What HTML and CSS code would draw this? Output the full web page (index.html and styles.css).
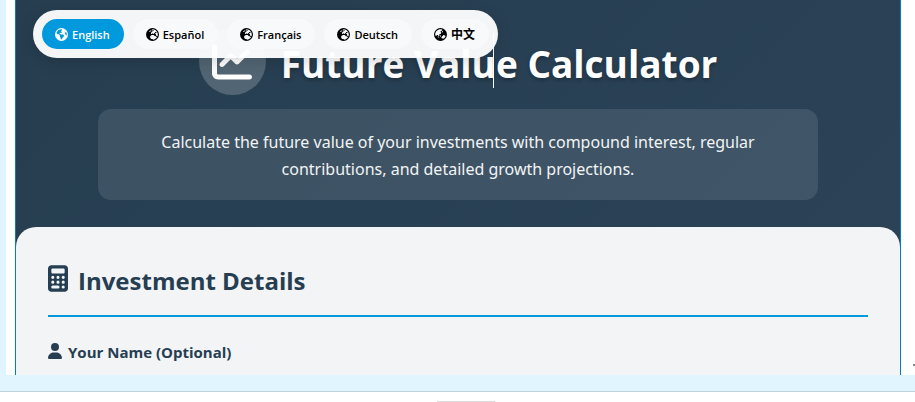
FILE: index.html
```html
<!DOCTYPE html>
<html lang="en">
<head>
    <meta charset="UTF-8">
    <meta name="viewport" content="width=device-width, initial-scale=1.0">
    <title>Future Value Calculator</title>
    <link rel="stylesheet" href="styles.css">
</head>
<body>
    <!-- Shared icons -->
    <svg class="icon-defs" aria-hidden="true">
        <symbol id="icon-americas" viewBox="0 0 512 512">
            <path d="M57.7 193l9.4 16.4c8.3 14.5 21.9 25.2 38 29.8L163 255.7c17.2 4.9 29 20.6 29 38.5v39.9c0 11 6.2 21 16 25.9s16 14.9 16 25.9v39c0 15.6 14.9 26.9 29.9 22.6c16.1-4.6 28.6-17.5 32.7-33.8l2.8-11.2c4.2-16.9 15.2-31.4 30.3-40l8.1-4.6c15-8.5 24.2-24.5 24.2-41.7v-8.3c0-12.7-5.1-24.9-14.1-33.9l-3.9-3.9c-9-9-21.2-14.1-33.9-14.1H257c-11.1 0-22.1-2.9-31.8-8.4l-34.5-19.7c-4.3-2.5-7.6-6.5-9.2-11.2c-3.2-9.6 1.1-20 10.2-24.5l5.9-3c6.6-3.3 14.3-3.9 21.3-1.5l23.2 7.7c8.2 2.7 17.2-.4 21.9-7.5c4.7-7 4.2-16.3-1.2-22.8l-13.6-16.3c-10-12-9.9-29.5 .3-41.3l15.7-18.3c8.8-10.3 10.2-25 3.5-36.7l-2.4-4.2c-3.5-.2-6.9-.3-10.4-.3C163.1 48 84.4 108.9 57.7 193zM464 256c0-36.8-9.6-71.4-26.4-101.5L412 164.8c-15.7 6.3-23.8 23.8-18.5 39.8l16.9 50.7c3.5 10.4 12 18.3 22.6 20.9l29.1 7.3c1.2-9 1.8-18.2 1.8-27.5zM0 256a256 256 0 1 1 512 0A256 256 0 1 1 0 256z"/>
        </symbol>
        <symbol id="icon-europe" viewBox="0 0 512 512">
            <path fill-rule="evenodd" d="M266.3 48.3L232.5 73.6c-5.4 4-8.5 10.4-8.5 17.1v9.1c0 6.8 5.5 12.3 12.3 12.3c2.4 0 4.8-.7 6.8-2.1l41.8-27.9c2-1.3 4.4-2.1 6.8-2.1h1c6.2 0 11.3 5.1 11.3 11.3c0 3-1.2 5.9-3.3 8l-19.9 19.9c-5.8 5.8-12.9 10.2-20.7 12.8l-26.5 8.8c-5.8 1.9-9.6 7.3-9.6 13.4c0 3.7-1.5 7.3-4.1 10l-17.9 17.9c-6.4 6.4-9.9 15-9.9 24v4.3c0 16.4 13.6 29.7 29.9 29.7c11 0 21.2-6.2 26.1-16l4-8.1c2.4-4.8 7.4-7.9 12.8-7.9c4.5 0 8.7 2.1 11.4 5.7l16.3 21.7c2.1 2.9 5.5 4.5 9.1 4.5c8.4 0 13.9-8.9 10.1-16.4l-1.1-2.3c-3.5-7 0-15.5 7.5-18l21.2-7.1c7.6-2.5 12.7-9.6 12.7-17.6c0-10.3 8.3-18.6 18.6-18.6H400c8.8 0 16 7.2 16 16s-7.2 16-16 16H379.3c-7.2 0-14.2 2.9-19.3 8l-4.7 4.7c-2.1 2.1-3.3 5-3.3 8c0 6.2 5.1 11.3 11.3 11.3h11.3c6 0 11.8 2.4 16 6.6l6.5 6.5c1.8 1.8 2.8 4.3 2.8 6.8s-1 5-2.8 6.8l-7.5 7.5C386 262 384 266.9 384 272s2 10 5.7 13.7L408 304c10.2 10.2 24.1 16 38.6 16H454c6.5-20.2 10-41.7 10-64c0-111.4-87.6-202.4-197.7-207.7zm172 307.9c-3.7-2.6-8.2-4.1-13-4.1c-6 0-11.8-2.4-16-6.6L396 332c-7.7-7.7-18-12-28.9-12c-9.7 0-19.2-3.5-26.6-9.8L314 287.4c-11.6-9.9-26.4-15.4-41.7-15.4H251.4c-12.6 0-25 3.7-35.5 10.7L188.5 301c-17.8 11.9-28.5 31.9-28.5 53.3v3.2c0 17 6.7 33.3 18.7 45.3l16 16c8.5 8.5 20 13.3 32 13.3H248c13.3 0 24 10.7 24 24c0 2.5 .4 5 1.1 7.3c71.3-5.8 132.5-47.6 165.2-107.2zM0 256a256 256 0 1 1 512 0A256 256 0 1 1 0 256zM187.3 100.7c-6.2-6.2-16.4-6.2-22.6 0l-32 32c-6.2 6.2-6.2 16.4 0 22.6s16.4 6.2 22.6 0l32-32c6.2-6.2 6.2-16.4 0-22.6z"/>
        </symbol>
        <symbol id="icon-asia" viewBox="0 0 512 512">
            <path fill-rule="evenodd" d="M51.7 295.1l31.7 6.3c7.9 1.6 16-.9 21.7-6.6l15.4-15.4c11.6-11.6 31.1-8.4 38.4 6.2l9.3 18.5c4.8 9.6 14.6 15.7 25.4 15.7c15.2 0 26.1-14.6 21.7-29.2l-6-19.9c-4.6-15.4 6.9-30.9 23-30.9h2.3c13.4 0 25.9-6.7 33.3-17.8l10.7-16.1c5.6-8.5 5.3-19.6-.8-27.7l-16.1-21.5c-10.3-13.7-3.3-33.5 13.4-37.7l17-4.3c7.5-1.9 13.6-7.2 16.5-14.4l16.4-40.9C303.4 52.1 280.2 48 256 48C141.1 48 48 141.1 48 256c0 13.4 1.3 26.5 3.7 39.1zm407.7 4.6c-3-.3-6-.1-9 .8l-15.8 4.4c-6.7 1.9-13.8-.9-17.5-6.7l-2-3.1c-6-9.4-16.4-15.1-27.6-15.1s-21.6 5.7-27.6 15.1l-6.1 9.5c-1.4 2.2-3.4 4.1-5.7 5.3L312 330.1c-18.1 10.1-25.5 32.4-17 51.3l5.5 12.4c8.6 19.2 30.7 28.5 50.5 21.1l2.6-1c10-3.7 21.3-2.2 29.9 4.1l1.5 1.1c37.2-29.5 64.1-71.4 74.4-119.5zM0 256a256 256 0 1 1 512 0A256 256 0 1 1 0 256zm144.5 92.1c-2.1 8.6 3.1 17.3 11.6 19.4l32 8c8.6 2.1 17.3-3.1 19.4-11.6s-3.1-17.3-11.6-19.4l-32-8c-8.6-2.1-17.3 3.1-19.4 11.6zm92-20c-2.1 8.6 3.1 17.3 11.6 19.4s17.3-3.1 19.4-11.6l8-32c2.1-8.6-3.1-17.3-11.6-19.4s-17.3 3.1-19.4 11.6l-8 32zM343.2 113.7c-7.9-4-17.5-.7-21.5 7.2l-16 32c-4 7.9-.7 17.5 7.2 21.5s17.5 .7 21.5-7.2l16-32c4-7.9 .7-17.5-7.2-21.5z"/>
        </symbol>
        <symbol id="icon-chart" viewBox="0 0 512 512">
            <path d="M64 64c0-17.7-14.3-32-32-32S0 46.3 0 64V400c0 44.2 35.8 80 80 80H480c17.7 0 32-14.3 32-32s-14.3-32-32-32H80c-8.8 0-16-7.2-16-16V64zm406.6 86.6c12.5-12.5 12.5-32.8 0-45.3s-32.8-12.5-45.3 0L320 210.7l-57.4-57.4c-12.5-12.5-32.8-12.5-45.3 0l-112 112c-12.5 12.5-12.5 32.8 0 45.3s32.8 12.5 45.3 0L240 221.3l57.4 57.4c12.5 12.5 32.8 12.5 45.3 0l128-128z"/>
        </symbol>
        <symbol id="icon-calculator" viewBox="0 0 384 512">
            <path fill-rule="evenodd" d="M64 0C28.7 0 0 28.7 0 64v384c0 35.3 28.7 64 64 64h256c35.3 0 64-28.7 64-64V64c0-35.3-28.7-64-64-64H64zM88 64h208a24 24 0 0 1 24 24v48a24 24 0 0 1-24 24H88a24 24 0 0 1-24-24V88a24 24 0 0 1 24-24zM92 204a30 30 0 1 1 0 60a30 30 0 1 1 0-60zM192 204a30 30 0 1 1 0 60a30 30 0 1 1 0-60zM292 204a30 30 0 1 1 0 60a30 30 0 1 1 0-60zM92 296a30 30 0 1 1 0 60a30 30 0 1 1 0-60zM192 296a30 30 0 1 1 0 60a30 30 0 1 1 0-60zM292 296a30 30 0 1 1 0 60a30 30 0 1 1 0-60zM92 388h100a30 30 0 1 1 0 60H92a30 30 0 1 1 0-60zM292 388a30 30 0 1 1 0 60a30 30 0 1 1 0-60z"/>
        </symbol>
        <symbol id="icon-user" viewBox="0 0 448 512">
            <path d="M224 256A128 128 0 1 0 224 0a128 128 0 1 0 0 256zm-45.7 48C79.8 304 0 383.8 0 482.3C0 498.7 13.3 512 29.7 512H418.3c16.4 0 29.7-13.3 29.7-29.7C448 383.8 368.2 304 269.7 304H178.3z"/>
        </symbol>
    </svg>

    <nav class="language-selector" aria-label="Language">
        <button class="lang-btn active"><svg class="lang-icon"><use href="#icon-americas"/></svg>English</button>
        <button class="lang-btn"><svg class="lang-icon"><use href="#icon-europe"/></svg>Español</button>
        <button class="lang-btn"><svg class="lang-icon"><use href="#icon-europe"/></svg>Français</button>
        <button class="lang-btn"><svg class="lang-icon"><use href="#icon-europe"/></svg>Deutsch</button>
        <button class="lang-btn lang-zh"><svg class="lang-icon"><use href="#icon-asia"/></svg>中文</button>
    </nav>

    <div class="frame">
        <div class="page">
            <div class="container">
                <header class="header">
                    <h1>
                        <span class="title-icon"><svg><use href="#icon-chart"/></svg></span>
                        <span class="title-text">Future Valu<span class="caret"></span>e Calculator</span>
                    </h1>
                    <p class="subtitle">Calculate the future value of your investments with compound interest, regular contributions, and detailed growth projections.</p>
                </header>
                <main class="form-section">
                    <h2><svg class="section-icon"><use href="#icon-calculator"/></svg>Investment Details</h2>
                    <label class="field-label" for="user-name"><svg class="label-icon"><use href="#icon-user"/></svg>Your Name (Optional)</label>
                    <input type="text" id="user-name">
                </main>
            </div>
            <div class="scroll-track"><span class="scroll-arrow"></span></div>
        </div>
    </div>
    <footer class="dock"><span class="dock-handle"></span></footer>
</body>
</html>
```

FILE: styles.css
```css
* {
    box-sizing: border-box;
}
body {
    margin: 0;
    height: 100vh;
    display: flex;
    flex-direction: column;
    overflow: hidden;
    background: #fff;
    color: #263e52;
    font-family: "Open Sans", "Noto Sans CJK SC", sans-serif;
}
.icon-defs {
    position: absolute;
    width: 0;
    height: 0;
}
svg {
    fill: currentColor;
    flex-shrink: 0;
}

/* Language bar floats over the header */
.language-selector {
    position: absolute;
    top: 10px;
    left: 33px;
    z-index: 10;
    display: flex;
    gap: 9px;
    padding: 9px;
    border-radius: 24px;
    background: rgba(255, 255, 255, 0.95);
    box-shadow: 0 4px 16px rgba(0, 0, 0, 0.15);
}
.lang-btn {
    display: flex;
    align-items: center;
    gap: 4px;
    height: 30px;
    padding: 0 14px 0 13px;
    border: none;
    border-radius: 15px;
    background: #f8f9fa;
    color: #000;
    font-family: inherit;
    font-size: 11px;
    font-weight: 600;
    cursor: pointer;
}
.lang-btn.active {
    background: #0099dd;
    color: #fff;
}
.lang-zh {
    font-size: 12px;
}
.lang-icon {
    width: 13px;
    height: 13px;
}

.frame {
    flex: 1;
    min-height: 0;
    padding: 0 0 16px 6px;
    background: #e1f5fe;
}
.page {
    display: flex;
    height: 100%;
    padding-left: 9px;
    overflow: hidden;
    background: #fff;
}
.container {
    flex: 1;
    border: solid #0080bb;
    border-width: 0 1px;
    background: linear-gradient(135deg, #263e50, #2c4358);
}
.header {
    padding: 28px 32px 27px;
    text-align: center;
    color: #fff;
}
.header h1 {
    display: flex;
    justify-content: center;
    align-items: center;
    gap: 15px;
    margin: 0 0 14px;
    font-size: 37px;
    line-height: 56px;
    text-shadow: 0 2px 4px rgba(0, 0, 0, 0.3);
}
.title-text {
    padding-top: 4px;
}
.title-icon {
    display: flex;
    align-items: center;
    justify-content: center;
    width: 67px;
    height: 67px;
    border-radius: 50%;
    background: rgba(255, 255, 255, 0.2);
}
.title-icon svg {
    width: 40px;
    height: 40px;
}
.caret {
    position: absolute;
    top: 33px;
    width: 1px;
    height: 55px;
    margin-left: -3px;
    background: #fff;
}
.subtitle {
    max-width: 720px;
    margin: 0 auto;
    padding: 20px 32px 17px;
    border-radius: 13px;
    background: rgba(255, 255, 255, 0.1);
    color: #f2f4f5;
    font-family: "Noto Sans", sans-serif;
    font-size: 16px;
    line-height: 27px;
}

.form-section {
    min-height: 400px;
    padding: 32px;
    border-radius: 20px 20px 0 0;
    background: #f3f4f6;
}
.form-section h2 {
    display: flex;
    align-items: center;
    gap: 10px;
    margin: 0 0 23px;
    padding-bottom: 12px;
    border-bottom: 2px solid #0099dd;
    font-size: 24px;
    line-height: 44px;
}
.section-icon {
    width: 20px;
    height: 27px;
    margin-bottom: 5px;
}
.field-label {
    display: flex;
    align-items: center;
    gap: 6px;
    margin-bottom: 12px;
    font-size: 15px;
    font-weight: bold;
    line-height: 24px;
}
.label-icon {
    width: 14px;
    height: 16px;
    margin-bottom: 2px;
}
.form-section input {
    width: 100%;
    height: 44px;
    border: 1px solid #ccd3d9;
    border-radius: 8px;
}
.scroll-track {
    display: flex;
    align-items: flex-end;
    justify-content: flex-end;
    width: 14px;
    padding-bottom: 9px;
}
.scroll-arrow {
    width: 2px;
    height: 2px;
    background: #888;
}
.dock {
    display: flex;
    align-items: flex-end;
    justify-content: center;
    height: 11px;
    border-top: 1px solid #c0d2dc;
}
.dock-handle {
    width: 58px;
    height: 1px;
    margin-left: 16px;
    background: #d8d8d8;
}
```
